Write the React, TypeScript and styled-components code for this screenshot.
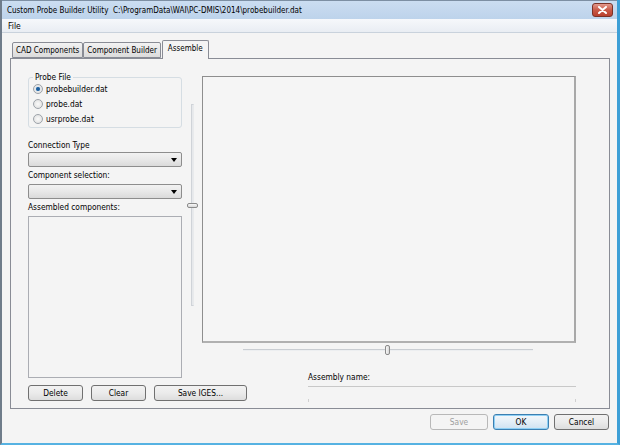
import styled, { createGlobalStyle } from "styled-components";

const GlobalStyle = createGlobalStyle`
  html, body {
    margin: 0;
    padding: 0;
    background: #f4f4f4;
  }
  * {
    box-sizing: border-box;
  }
`;

const FONT = `"DejaVu Sans Condensed", "Liberation Sans", Arial, sans-serif`;

const Window = styled.div`
  width: 620px;
  height: 445px;
  display: flex;
  flex-direction: column;
  background: #f4f4f4;
  border-left: 2px solid #6f7c8a;
  border-right: 3px solid #3d9fd6;
  border-bottom: 2px solid #56b2e2;
  font-family: ${FONT};
  font-size: 8.3px;
  color: #000;
  overflow: hidden;
`;

const TitleBar = styled.div`
  height: 19px;
  flex: none;
  display: flex;
  align-items: center;
  justify-content: space-between;
  padding: 0 4px 0 5px;
  background: linear-gradient(#cbddf1, #bdd3eb);
  border-top: 1px solid #7d8fa3;
`;

const TitleText = styled.span`
  font-size: 8px;
  white-space: pre;
`;

const CloseButton = styled.div`
  width: 21px;
  height: 14px;
  border: 1px solid #7b3227;
  border-radius: 3px;
  background: linear-gradient(#e49a8d, #c95a48 50%, #b9412e);
  display: flex;
  align-items: center;
  justify-content: center;
`;

const MenuBar = styled.div`
  height: 14px;
  flex: none;
  display: flex;
  align-items: center;
  padding-left: 6px;
  background: linear-gradient(#f6f8fb, #e9edf3);
  border-bottom: 1px solid #c9d2dc;
`;

const MenuItem = styled.span`
  font-size: 8.5px;
`;

const Client = styled.div`
  flex: 1;
  display: flex;
  flex-direction: column;
  padding: 7px 8px 0 8px;
`;

const TabStrip = styled.div`
  display: flex;
  align-items: flex-end;
  height: 18px;
  padding-left: 2px;
  position: relative;
  z-index: 1;
`;

const Tab = styled.div<{ $active?: boolean }>`
  height: ${(p) => (p.$active ? "19px" : "16px")};
  margin-bottom: ${(p) => (p.$active ? "-1px" : "0")};
  margin-left: ${(p) => (p.$active ? "1px" : "0")};
  padding: ${(p) => (p.$active ? "0 5px 4px" : "0 3px")};
  font-size: 8px;
  display: flex;
  align-items: center;
  border: 1px solid #898c95;
  border-bottom: ${(p) => (p.$active ? "none" : "1px solid #898c95")};
  border-radius: 2px 2px 0 0;
  background: ${(p) =>
    p.$active ? "#f4f4f4" : "linear-gradient(#f3f3f3, #e6e6e6 50%, #dcdcdc)"};
  & + & {
    border-left: ${(p) => (p.$active ? "1px solid #898c95" : "none")};
  }
`;

const Panel = styled.div`
  width: 600px;
  height: 351px;
  border: 1px solid #898c95;
  background: #f4f4f4;
  display: flex;
  padding: 13px 0 0 17px;
`;

const LeftColumn = styled.div`
  width: 154px;
  flex: none;
  display: flex;
  flex-direction: column;
`;

const GroupBox = styled.fieldset`
  margin: 0;
  height: 56px;
  border: 1px solid #d5dde3;
  border-radius: 3px;
  padding: 1px 0 0 4px;
  display: flex;
  flex-direction: column;
  gap: 3px;
`;

const Legend = styled.legend`
  padding: 0 2px;
  margin-left: 0;
`;

const RadioRow = styled.label`
  display: flex;
  align-items: center;
  gap: 3px;
  height: 12px;
`;

const Radio = styled.span<{ $checked?: boolean }>`
  width: 10px;
  height: 10px;
  border-radius: 50%;
  border: 1px solid #9da3aa;
  background: radial-gradient(circle, #fafafa, #dcdcdc);
  display: flex;
  align-items: center;
  justify-content: center;
  &::after {
    content: "";
    width: 4px;
    height: 4px;
    border-radius: 50%;
    background: ${(p) => (p.$checked ? "#1d5e9c" : "transparent")};
    box-shadow: ${(p) => (p.$checked ? "0 0 1px #6db2e8" : "none")};
  }
`;

const FieldLabel = styled.div<{ $top: number }>`
  margin-top: ${(p) => p.$top}px;
  height: 11px;
  line-height: 11px;
`;

const Combo = styled.div<{ $top: number }>`
  margin-top: ${(p) => p.$top}px;
  height: 15px;
  border: 1px solid #8d8d8d;
  border-radius: 2px;
  background: linear-gradient(#f2f2f2, #e8e8e8 50%, #dadada);
  display: flex;
  align-items: center;
  justify-content: flex-end;
  padding-right: 4px;
`;

const Arrow = styled.span`
  width: 0;
  height: 0;
  border-left: 3px solid transparent;
  border-right: 3px solid transparent;
  border-top: 4px solid #000;
`;

const ListBox = styled.div`
  margin-top: 3px;
  height: 162px;
  border: 1px solid #abadb3;
  background: #f4f4f4;
`;

const ButtonRow = styled.div`
  margin-top: 7px;
  display: flex;
  gap: 8px;
`;

const Button = styled.div<{ $w: number; $default?: boolean; $disabled?: boolean }>`
  flex: none;
  width: ${(p) => p.$w}px;
  height: 16px;
  border: 1px solid
    ${(p) => (p.$default ? "#3c7fb1" : p.$disabled ? "#b8b8b8" : "#707070")};
  border-radius: 3px;
  background: ${(p) =>
    p.$disabled
      ? "#f4f4f4"
      : p.$default
      ? "linear-gradient(#f4f8fb, #e3eef7 50%, #cfe2f1)"
      : "linear-gradient(#f2f2f2, #ebebeb 50%, #dddddd)"};
  color: ${(p) => (p.$disabled ? "#a0a0a0" : "#000")};
  display: flex;
  align-items: center;
  justify-content: center;
  box-shadow: ${(p) => (p.$default ? "inset 0 0 0 1px #8fd0f5" : "none")};
`;

const VSliderColumn = styled.div`
  width: 20px;
  flex: none;
  padding-top: 32px;
  display: flex;
  justify-content: center;
`;

const VTrack = styled.div`
  width: 3px;
  height: 202px;
  border: 1px solid #cfd3d8;
  border-right-color: #e8eaec;
  background: #e6e8eb;
  position: relative;
`;

const VThumb = styled.div`
  position: absolute;
  left: -5px;
  top: 98px;
  width: 11px;
  height: 5px;
  border: 1px solid #8a8a8a;
  border-radius: 2px;
  background: linear-gradient(#f8f8f8, #d8d8d8);
`;

const RightColumn = styled.div`
  width: 374px;
  flex: none;
  padding-top: 4px;
  display: flex;
  flex-direction: column;
`;

const Viewport = styled.div`
  height: 267px;
  border: 1px solid #8e8e8e;
  border-right: 2px solid #a8a8a8;
  border-bottom: 2px solid #b0b0b0;
  background: #f5f5f5;
`;

const HSliderRow = styled.div`
  height: 14px;
  display: flex;
  align-items: center;
  padding-left: 41px;
`;

const HTrack = styled.div`
  width: 290px;
  height: 2px;
  border-top: 1px solid #c9cdd2;
  border-bottom: 1px solid #eceef0;
  position: relative;
`;

const HThumb = styled.div`
  position: absolute;
  left: 142px;
  top: -5px;
  width: 5px;
  height: 10px;
  border: 1px solid #8a8a8a;
  border-radius: 2px;
  background: linear-gradient(90deg, #f8f8f8, #d8d8d8);
`;

const NameBlock = styled.div`
  margin-top: 15px;
  margin-left: 106px;
  display: flex;
  flex-direction: column;
`;

const NameInput = styled.div`
  margin-top: 4px;
  height: 16px;
  border-top: 1px solid #c8c8c8;
  position: relative;
  &::before,
  &::after {
    content: "";
    position: absolute;
    bottom: 0;
    width: 1px;
    height: 3px;
    background: #d0d0d0;
  }
  &::before {
    left: 0;
  }
  &::after {
    right: 0;
  }
`;

const Footer = styled.div`
  display: flex;
  justify-content: flex-end;
  gap: 5px;
  padding: 5px 0 0 0;
`;

export default function App() {
  const tabs = [
    { title: "CAD Components", active: false },
    { title: "Component Builder", active: false },
    { title: "Assemble", active: true },
  ];
  const probeFiles = ["probebuilder.dat", "probe.dat", "usrprobe.dat"];

  return (
    <>
      <GlobalStyle />
      <Window>
        <TitleBar>
          <TitleText>
            {"Custom Probe Builder Utility  C:\\ProgramData\\WAI\\PC-DMIS\\2014\\probebuilder.dat"}
          </TitleText>
          <CloseButton>
            <svg width="9" height="8" viewBox="0 0 9 8">
              <path
                d="M1 1 L8 7 M8 1 L1 7"
                stroke="#fff"
                strokeWidth="2"
                strokeLinecap="round"
              />
            </svg>
          </CloseButton>
        </TitleBar>
        <MenuBar>
          <MenuItem>File</MenuItem>
        </MenuBar>
        <Client>
          <TabStrip>
            {tabs.map((t) => (
              <Tab key={t.title} $active={t.active}>
                {t.title}
              </Tab>
            ))}
          </TabStrip>
          <Panel>
            <LeftColumn>
              <GroupBox>
                <Legend>Probe File</Legend>
                {probeFiles.map((f, i) => (
                  <RadioRow key={f}>
                    <Radio $checked={i === 0} />
                    {f}
                  </RadioRow>
                ))}
              </GroupBox>
              <FieldLabel $top={12}>Connection Type</FieldLabel>
              <Combo $top={1}>
                <Arrow />
              </Combo>
              <FieldLabel $top={3}>Component selection:</FieldLabel>
              <Combo $top={3}>
                <Arrow />
              </Combo>
              <FieldLabel $top={3}>Assembled components:</FieldLabel>
              <ListBox />
              <ButtonRow>
                <Button $w={55}>Delete</Button>
                <Button $w={55}>Clear</Button>
                <Button $w={93}>Save IGES...</Button>
              </ButtonRow>
            </LeftColumn>
            <VSliderColumn>
              <VTrack>
                <VThumb />
              </VTrack>
            </VSliderColumn>
            <RightColumn>
              <Viewport />
              <HSliderRow>
                <HTrack>
                  <HThumb />
                </HTrack>
              </HSliderRow>
              <NameBlock>
                <span>Assembly name:</span>
                <NameInput />
              </NameBlock>
            </RightColumn>
          </Panel>
          <Footer>
            <Button $w={58} $disabled>
              Save
            </Button>
            <Button $w={56} $default>
              OK
            </Button>
            <Button $w={55}>Cancel</Button>
          </Footer>
        </Client>
      </Window>
    </>
  );
}
